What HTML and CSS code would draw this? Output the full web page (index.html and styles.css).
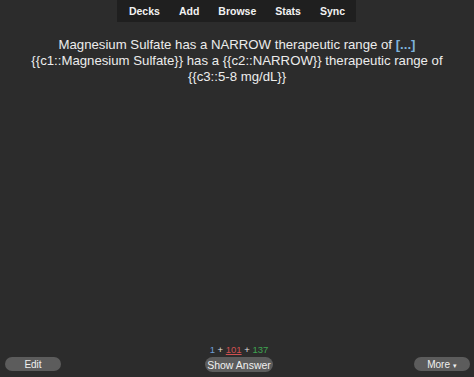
FILE: index.html
```html
<!DOCTYPE html>
<html lang="en">
<head>
    <meta charset="UTF-8">
    <title>Review</title>
    <link rel="stylesheet" href="styles.css">
</head>
<body>

<nav class="topbar">
    <a class="tab">Decks</a>
    <a class="tab">Add</a>
    <a class="tab">Browse</a>
    <a class="tab">Stats</a>
    <a class="tab">Sync</a>
</nav>

<main class="card">
    <div class="cloze">Magnesium Sulfate has a NARROW therapeutic range of <span class="blank">[...]</span></div>
    <div>{{c1::Magnesium Sulfate}} has a {{c2::NARROW}} therapeutic range of {{c3::5-8 mg/dL}}</div>
</main>

<footer class="bottombar">
    <div class="side">
        <button class="btn btn-edit">Edit</button>
    </div>
    <div class="middle">
        <div class="counts"><span class="new">1</span> + <span class="learn">101</span> + <span class="due">137</span></div>
        <button class="btn btn-answer">Show Answer</button>
    </div>
    <div class="side right">
        <button class="btn btn-more">More <span class="caret">&#9662;</span></button>
    </div>
</footer>

</body>
</html>
```

FILE: styles.css
```css
* {
    margin: 0;
    padding: 0;
    box-sizing: border-box;
}

html, body {
    height: 100%;
}

body {
    background-color: #2c2c2c;
    color: #e6e6e6;
    font-family: "Liberation Sans", Arial, sans-serif;
    display: flex;
    flex-direction: column;
    overflow: hidden;
}

.topbar {
    align-self: center;
    display: flex;
    gap: 19px;
    background-color: #1f1f1f;
    padding: 5px 11px 0 12px;
    height: 22px;
    margin-left: -1px;
}

.tab {
    font-size: 10.5px;
    font-weight: bold;
    color: #f2f2f2;
}

.card {
    flex: 1;
    text-align: center;
    font-size: 13.2px;
    line-height: 16px;
    padding: 15px 10px 0 10px;
    color: #ececec;
}

.blank {
    color: #7fb4dc;
    font-weight: bold;
}

.bottombar {
    display: flex;
    align-items: flex-end;
    justify-content: space-between;
    padding: 0 4px 5px 5px;
}

.side {
    width: 60px;
}

.side.right {
    display: flex;
    justify-content: flex-end;
}

.middle {
    display: flex;
    flex-direction: column;
    align-items: center;
    margin-left: 3px;
}

.counts {
    font-size: 9.5px;
    color: #e0e0e0;
    margin-bottom: 2px;
}

.new {
    color: #6f9ed8;
}

.learn {
    color: #d05050;
    text-decoration: underline;
}

.due {
    color: #3fa452;
}

.btn {
    font-family: "Liberation Sans", Arial, sans-serif;
    font-size: 10px;
    color: #f0f0f0;
    background-color: #5c5c5c;
    border: none;
    border-radius: 8px;
    height: 14px;
}

.btn-edit {
    width: 56px;
    margin-bottom: 1px;
}

.btn-answer {
    width: 68px;
    height: 15px;
    font-size: 10.5px;
}

.btn-more {
    width: 56px;
    margin-bottom: 1px;
}

.caret {
    font-size: 7px;
}
```
